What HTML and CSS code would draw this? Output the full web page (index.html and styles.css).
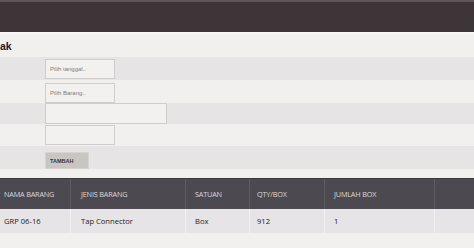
FILE: index.html
```html
<!DOCTYPE html>
<html>
<head>
<meta charset="utf-8">
<link rel="stylesheet" href="styles.css">
</head>
<body>
<div class="topbar"></div>
<div class="title-row"><span class="title">ak</span></div>
<div class="form">
  <div class="frow dark r1"><div class="inp w70">Pilih tanggal..</div></div>
  <div class="frow light r2"><div class="inp w70">Pilih Barang..</div></div>
  <div class="frow dark r3"><div class="inp w122"></div></div>
  <div class="frow light r4"><div class="inp w70"></div></div>
  <div class="frow dark r5"><div class="btn">TAMBAH</div></div>
</div>
<div class="gap"></div>
<div class="table">
  <div class="trow thead">
    <div class="c c1">NAMA BARANG</div>
    <div class="c c2">JENIS BARANG</div>
    <div class="c c3">SATUAN</div>
    <div class="c c4">QTY/BOX</div>
    <div class="c c5">JUMLAH BOX</div>
    <div class="c c6"></div>
  </div>
  <div class="trow tbody">
    <div class="c c1">GRP 06-16</div>
    <div class="c c2">Tap Connector</div>
    <div class="c c3">Box</div>
    <div class="c c4">912</div>
    <div class="c c5">1</div>
    <div class="c c6"></div>
  </div>
</div>
</body>
</html>
```
FILE: styles.css
```css
html, body {
  margin: 0;
  padding: 0;
}
body {
  width: 474px;
  height: 248px;
  overflow: hidden;
  background: #f1f0ee;
  font-family: "Liberation Sans", Arial, sans-serif;
}
.topbar {
  height: 30px;
  background: #3d3538;
  border-top: 2px solid #5c5659;
  border-bottom: 2px solid #f7f6f5;
}
.title-row {
  height: 23px;
  display: flex;
  align-items: center;
  background: #f1f0ee;
}
.title {
  font-weight: bold;
  font-size: 10.5px;
  color: #1e1b1c;
}
.frow {
  display: flex;
  align-items: center;
  padding-left: 45px;
}
.dark { background: #e6e4e4; }
.light { background: #f1f0ee; }
.r1 { height: 23px; }
.r2 { height: 23px; align-items: flex-end; }
.r3 { height: 21px; align-items: flex-start; }
.r4 { height: 22px; align-items: flex-start; padding-top: 1px; box-sizing: border-box; }
.r5 { height: 23px; align-items: flex-end; }
.inp {
  box-sizing: border-box;
  height: 20px;
  background: #f2f1ef;
  border: 1px solid #cfcccb;
  font-size: 6px;
  color: #7e7a7a;
  display: flex;
  align-items: center;
  padding-left: 4px;
}
.r3 .inp { height: 21px; }
.w70 { width: 70px; }
.w122 { width: 122px; }
.btn {
  box-sizing: border-box;
  width: 44px;
  height: 17px;
  background: #c9c5c3;
  border: 1px solid #d6d2d0;
  font-size: 5.5px;
  font-weight: bold;
  color: #3a3536;
  display: flex;
  align-items: center;
  padding-left: 4px;
}
.gap { height: 9px; }
.table {
  font-family: "Open Sans", sans-serif;
}
.trow {
  display: flex;
}
.thead {
  height: 31px;
  background: #4c4950;
  color: #dcd9dd;
  font-size: 7.3px;
  letter-spacing: -0.2px;
  border-top: 1px solid #3d3a40;
  box-sizing: border-box;
}
.tbody {
  height: 24px;
  background: #e6e4e6;
  color: #262224;
  font-size: 7.6px;
}
.c {
  box-sizing: border-box;
  display: flex;
  align-items: center;
  padding-left: 4px;
}
.thead .c + .c { border-left: 1px solid #5f5c63; }
.tbody .c + .c { border-left: 1px solid #f2f1f2; }
.c1 { width: 70px; }
.c2 { width: 115px; padding-left: 10px; }
.c3 { width: 64px; padding-left: 9px; }
.c4 { width: 75px; padding-left: 7px; }
.c5 { width: 110px; padding-left: 9px; }
.c6 { flex: 1; }
```
